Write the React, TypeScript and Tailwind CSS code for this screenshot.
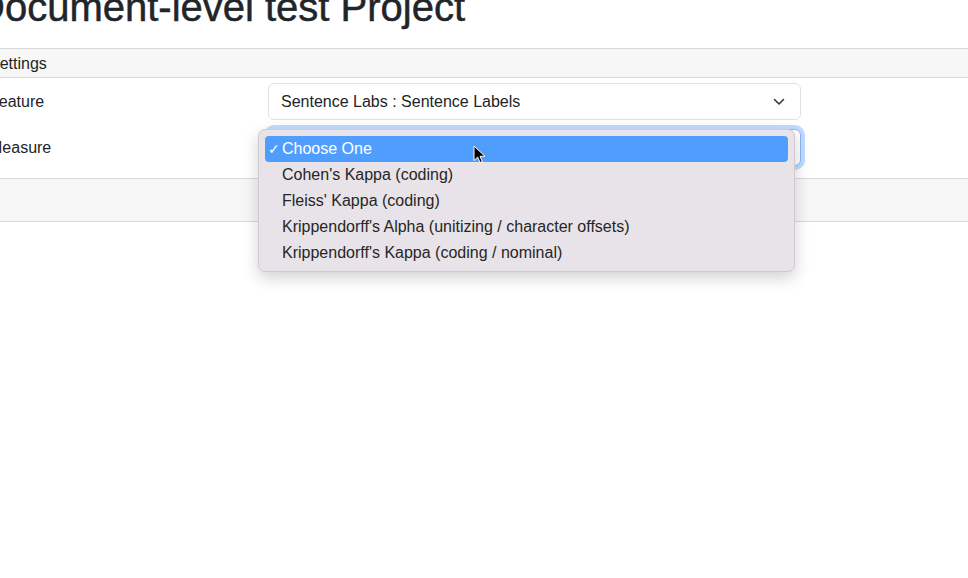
import * as React from "react"

const measures = [
  "Choose One",
  "Cohen's Kappa (coding)",
  "Fleiss' Kappa (coding)",
  "Krippendorff's Alpha (unitizing / character offsets)",
  "Krippendorff's Kappa (coding / nominal)",
]

function Chevron() {
  return (
    <svg width="12" height="8" viewBox="0 0 12 8" fill="none" className="shrink-0">
      <path d="M1.5 1.5l4.5 4.5 4.5-4.5" stroke="#343a40" strokeWidth="1.6" strokeLinecap="round" strokeLinejoin="round" />
    </svg>
  )
}

function Cursor() {
  return (
    <svg width="13" height="19" viewBox="0 0 13 19" className="absolute left-[214px] top-[15px]">
      <path
        d="M1 1v14.5l3.6-3.4 2.4 5.4 2.3-1-2.3-5.2h5z"
        fill="#000"
        stroke="#fff"
        strokeWidth="1"
        strokeLinejoin="round"
      />
    </svg>
  )
}

function MeasureMenu() {
  return (
    <div className="absolute left-[-10px] top-0 z-10 w-[537px] rounded-[7px] border border-[#cfcbcf] bg-[#e8e3e8] px-[6px] pt-[6px] pb-[5px] shadow-[0_6px_16px_rgba(0,0,0,0.18)]">
      {measures.map((m, i) => (
        <div
          key={m}
          className={
            i === 0
              ? "relative flex h-[26px] items-center rounded-[4px] bg-[#4f9efe] pl-[17px] text-white"
              : "flex h-[26px] items-center pl-[17px] text-[#262626]"
          }
        >
          {i === 0 && <span className="absolute left-[3px] text-[14px]">✓</span>}
          {m}
        </div>
      ))}
      <Cursor />
    </div>
  )
}

export default function App() {
  return (
    <div className="min-h-screen overflow-hidden bg-white font-['Liberation_Sans',Arial,sans-serif] text-[16px] text-[#212529]">
      <div className="ml-[-24px] w-[1040px]">
        <h1 className="mt-[-17px] mb-[17px] text-[40px] leading-[48px] font-medium [-webkit-text-stroke:0.5px_#212529]">
          Document-level test Project
        </h1>

        <div className="border-y border-[#d9d9d9]">
          <div className="h-[29px] border-b border-[#d9d9d9] bg-[#f7f7f7] pl-[13px] leading-[29px]">
            Settings
          </div>

          <div className="flex flex-col gap-[9px] pt-[5px] pb-[12px] pl-[13px]">
            <div className="flex items-center">
              <div className="w-[279px]">Feature</div>
              <div className="flex h-[37px] w-[533px] items-center justify-between rounded-[6px] border border-[#dee2e6] bg-white pr-[15px] pl-[12px]">
                <span>Sentence Labs : Sentence Labels</span>
                <Chevron />
              </div>
            </div>

            <div className="flex items-center">
              <div className="w-[279px]">Measure</div>
              <div className="relative h-[37px] w-[533px]">
                <div className="flex h-full items-center justify-between rounded-[6px] border border-[#86b7fe] bg-white pr-[15px] pl-[12px] shadow-[0_0_0_4px_rgba(13,110,253,0.25)]">
                  <span>Choose One</span>
                  <Chevron />
                </div>
                <MeasureMenu />
              </div>
            </div>
          </div>

          <div className="h-[43px] border-t border-[#d9d9d9] bg-[#f7f7f7]" />
        </div>
      </div>
    </div>
  )
}
